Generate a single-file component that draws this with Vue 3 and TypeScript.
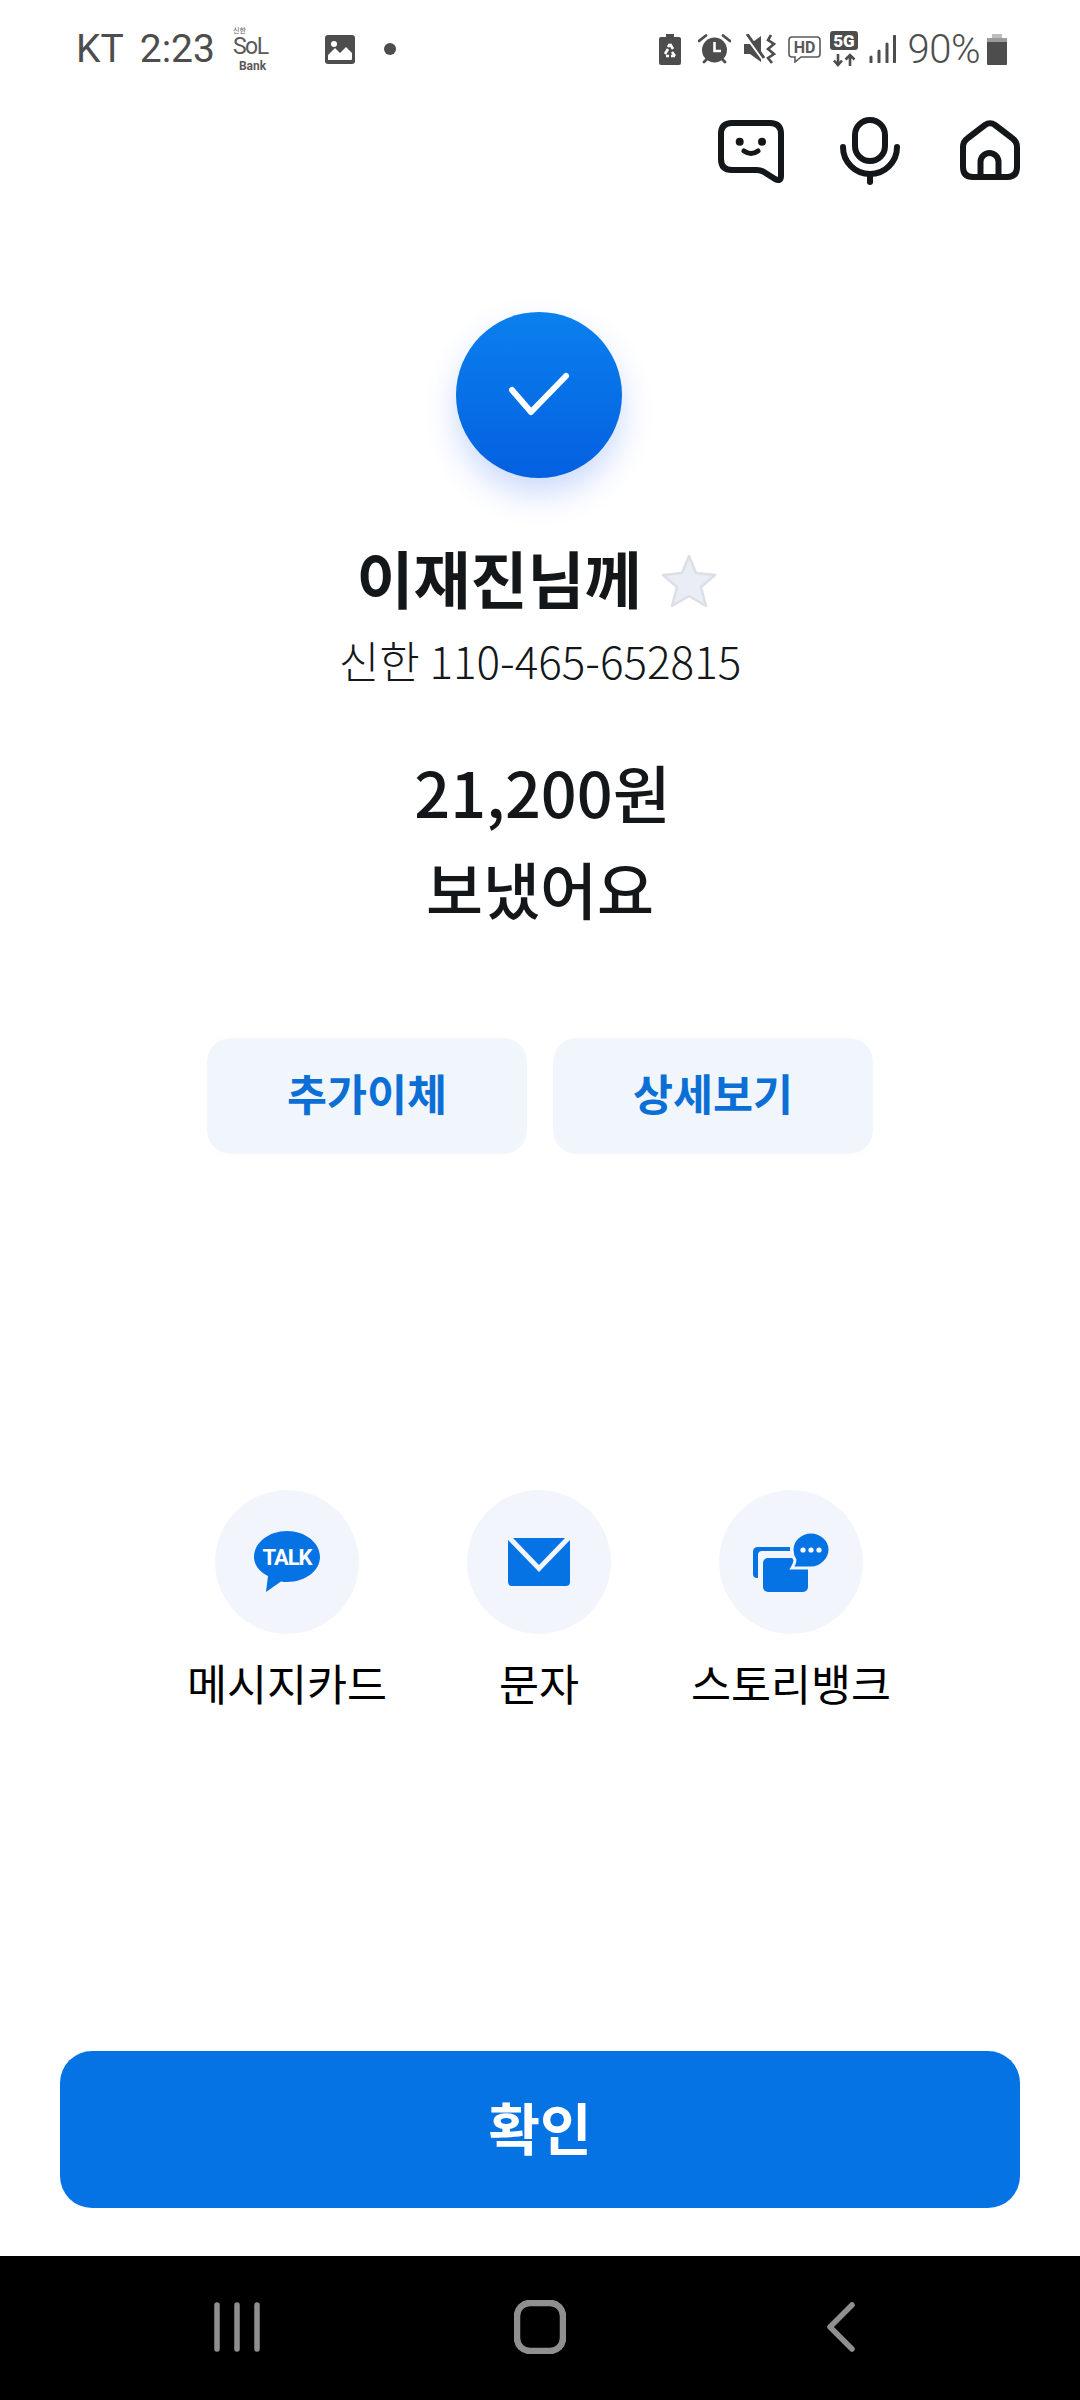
<template>
  <div class="screen">
    <!-- status bar -->
    <div class="status-bar">
      <span class="carrier">KT</span>
      <span class="clock">2:23</span>
      <div class="sol-logo">
        <span class="sol-top">신한</span>
        <span class="sol-main">SoL</span>
        <span class="sol-bank">Bank</span>
      </div>
      <svg class="st-image" width="30" height="29" viewBox="0 0 30 29">
        <rect width="30" height="29" rx="3" fill="#4d4d4d" />
        <path d="M3 20 L10 13 L15 18 L21 12 L27 18 V24 Q27 25 26 25 H3 Z" fill="#fff" />
        <circle cx="9" cy="9" r="3" fill="#fff" />
      </svg>
      <span class="st-dot"></span>

      <div class="st-right">
        <svg width="22" height="31" viewBox="0 0 22 31">
          <path d="M7 0 H15 V3 H20 Q22 3 22 5 V29 Q22 31 20 31 H2 Q0 31 0 29 V5 Q0 3 2 3 H7 Z" fill="#4d4d4d" />
          <path d="M11 10 L14 15 M9 13 L11 10 M6 20 L9 15 M7 22 H10 M16 22 H12 M16 22 L13 18" stroke="#fff" stroke-width="2.6" fill="none" />
        </svg>
        <svg class="ic-alarm" width="33" height="30" viewBox="0 0 33 30">
          <circle cx="16.5" cy="16" r="12.5" fill="#4d4d4d" />
          <path d="M16.5 8 V17 H23" stroke="#fff" stroke-width="2.6" fill="none" />
          <path d="M1 7 L8 1.5 M32 7 L25 1.5 M6 28 L9 25 M27 28 L24 25" stroke="#4d4d4d" stroke-width="2.8" stroke-linecap="round" />
        </svg>
        <svg class="ic-mute" width="32" height="30" viewBox="0 0 32 30">
          <path d="M0 10 H6 L17 2 V28 L6 20 H0 Z" fill="#4d4d4d" />
          <path d="M2 2 L21 28" stroke="#fff" stroke-width="3" />
          <path d="M3 0 L20 24" stroke="#4d4d4d" stroke-width="3" />
          <path d="M27 1 L24 6 L30 10 L24 15 L30 20 L24 24 L28 29" stroke="#4d4d4d" stroke-width="2.6" fill="none" />
        </svg>
        <svg class="ic-hd" width="33" height="27" viewBox="0 0 33 27">
          <path d="M4 1 H29 Q32 1 32 4 V18 Q32 21 29 21 H13 L7 26 V21 H4 Q1 21 1 18 V4 Q1 1 4 1 Z" fill="none" stroke="#5a5a5a" stroke-width="1.6" />
          <text x="16.5" y="17" class="hd-text">HD</text>
        </svg>
        <svg class="ic-5g" width="28" height="36" viewBox="0 0 28 36">
          <rect width="28" height="19" rx="3" fill="#4d4d4d" />
          <text x="14" y="15.5" class="five-text">5G</text>
          <path d="M8 23 V34 M4 29.5 L8 34 L12 29.5 M20 35 V24 M15.5 28.5 L20 24 L24.5 28.5" stroke="#4d4d4d" stroke-width="2.6" fill="none" />
        </svg>
        <svg class="ic-signal" width="27" height="28" viewBox="0 0 27 28">
          <path d="M2 22 V27 M10 16 V27 M18 9 V27 M25.5 1 V27" stroke="#4d4d4d" stroke-width="3" stroke-linecap="round" />
        </svg>
        <span class="percent">90%</span>
        <svg class="ic-battery" width="20" height="31" viewBox="0 0 20 31">
          <path d="M5 0 H15 V4 H5 Z" fill="#bdbdbd" />
          <path d="M0 5 H20 V30 Q20 31 19 31 H1 Q0 31 0 30 Z" fill="#4d4d4d" />
          <rect y="4" width="20" height="4" fill="#9a9a9a" />
        </svg>
      </div>
    </div>

    <!-- top actions -->
    <div class="top-actions">
      <svg class="ic-chat" width="66" height="64" viewBox="0 0 66 64">
        <path d="M14 3 H52 Q63 3 63 14 V56 Q63 62 57 59 L46 52 Q43 50 39 50 H14 Q3 50 3 39 V14 Q3 3 14 3 Z" fill="none" stroke="#14171a" stroke-width="6" stroke-linejoin="round" />
        <circle cx="21.7" cy="21.7" r="4" fill="#14171a" />
        <circle cx="44" cy="21.7" r="4" fill="#14171a" />
        <path d="M26 31 Q33 36 40 31" fill="none" stroke="#14171a" stroke-width="5" stroke-linecap="round" />
      </svg>
      <svg class="ic-mic" width="60" height="68" viewBox="0 0 60 68">
        <rect x="15" y="3" width="30" height="41" rx="15" fill="none" stroke="#14171a" stroke-width="6" />
        <path d="M3 30 A27 27 0 0 0 57 30" fill="none" stroke="#14171a" stroke-width="6" stroke-linecap="round" />
        <path d="M30 57 V65" stroke="#14171a" stroke-width="6" stroke-linecap="round" />
      </svg>
      <svg class="ic-home" width="60" height="60" viewBox="0 0 60 60">
        <path d="M25 5 Q30 1.5 35 5 L52 18 Q57 21.5 57 27 V47 Q57 57 47 57 H13 Q3 57 3 47 V27 Q3 21.5 8 18 Z" fill="none" stroke="#14171a" stroke-width="6" stroke-linejoin="round" />
        <path d="M20.5 57 V42 A9 9 0 0 1 38.5 42 V57" fill="none" stroke="#14171a" stroke-width="6" />
      </svg>
    </div>

    <main class="content">
      <div class="check-circle">
        <svg width="62" height="46" viewBox="0 0 62 46">
          <path d="M4 18 L23 40 L58 4" fill="none" stroke="#fff" stroke-width="6" stroke-linecap="round" stroke-linejoin="round" />
        </svg>
      </div>

      <div class="recipient">
        <h1 class="name">{{ recipient }}</h1>
        <svg class="star" width="56" height="54" viewBox="0 0 56 54">
          <path d="M28 2 L35 19 L54 21 L40 33 L45 52 L28 42 L11 52 L16 33 L2 21 L21 19 Z" fill="#e9edf6" stroke="#dcdfe6" stroke-width="2.5" stroke-linejoin="round" />
        </svg>
      </div>
      <p class="account">{{ account }}</p>

      <p class="amount">{{ amount }}</p>
      <p class="sent">보냈어요</p>

      <div class="sub-actions">
        <button class="sub-btn">추가이체</button>
        <button class="sub-btn">상세보기</button>
      </div>

      <div class="share-row">
        <div v-for="item in shareItems" :key="item.key" class="share-item">
          <div class="share-icon">
            <svg v-if="item.key === 'talk'" width="66" height="62" viewBox="0 0 66 62">
              <path d="M33 0 C51 0 66 11.500 66 26 C66 40 51 51 33 51 C31 51 29 51 27 50.500 L12 61 L14 45 C5 40.500 0 33.500 0 26 C0 11.500 15 0 33 0 Z" fill="#0673e5" />
              <text x="33" y="34" class="talk-text">TALK</text>
            </svg>
            <svg v-else-if="item.key === 'sms'" width="62" height="48" viewBox="0 0 62 48">
              <path d="M0 2 L31 34 L62 2 V44 Q62 48 58 48 H4 Q0 48 0 44 Z" fill="#0673e5" />
              <path d="M5 0 H57 L31 27 Z" fill="#0673e5" />
            </svg>
            <svg v-else width="78" height="60" viewBox="0 0 78 60">
              <path d="M6 15 H38 V19 H10 Q6 19 6 23 V46 H5 Q1 46 1 42 V20 Q1 15 6 15 Z" fill="#0673e5" />
              <rect x="11" y="26" width="45" height="34" rx="5" fill="#0673e5" />
              <path d="M59 0 C69 0 78 8 78 17.500 C78 27 69 36 59 36 L40 36 C42 33 43 31 43 28 C41 25 40 21 40 17.500 C40 8 49 0 59 0 Z" fill="#0673e5" stroke="#f2f6fc" stroke-width="3" />
              <circle cx="51" cy="18" r="2.600" fill="#fff" />
              <circle cx="59" cy="18" r="2.600" fill="#fff" />
              <circle cx="67" cy="18" r="2.600" fill="#fff" />
            </svg>
          </div>
          <span class="share-label">{{ item.label }}</span>
        </div>
      </div>
    </main>

    <div class="confirm-wrap">
      <button class="confirm-btn">확인</button>
    </div>

    <!-- android nav -->
    <nav class="nav-bar">
      <svg width="46" height="50" viewBox="0 0 46 50">
        <path d="M3 3 V47 M23 3 V47 M43 3 V47" stroke="#8f8f8f" stroke-width="5.5" stroke-linecap="round" />
      </svg>
      <svg class="nav-home" width="52" height="54" viewBox="0 0 52 54">
        <rect x="3" y="3" width="46" height="48" rx="13" fill="none" stroke="#8f8f8f" stroke-width="6.5" />
      </svg>
      <svg width="30" height="50" viewBox="0 0 30 50">
        <path d="M26 3 L4 25 L26 47" fill="none" stroke="#8f8f8f" stroke-width="5.5" stroke-linecap="round" stroke-linejoin="round" />
      </svg>
    </nav>
  </div>
</template>

<script setup lang="ts">
interface ShareItem {
  key: string
  label: string
}

const recipient = '이재진님께'
const account = '신한 110-465-652815'
const amount = '21,200원'

const shareItems: ShareItem[] = [
  { key: 'talk', label: '메시지카드' },
  { key: 'sms', label: '문자' },
  { key: 'story', label: '스토리뱅크' },
]
</script>

<style>
html,
body {
  margin: 0;
  background: #fff;
}
</style>

<style scoped>
.screen {
  width: 1080px;
  height: 2400px;
  display: flex;
  flex-direction: column;
  background: #fff;
  color: #14171a;
  font-family: "Noto Sans CJK KR", "Noto Sans", sans-serif;
  overflow: hidden;
}

.status-bar {
  height: 96px;
  display: flex;
  align-items: center;
  padding: 2px 73px 0 76px;
  box-sizing: border-box;
  color: #4d4d4d;
  font-family: Roboto, sans-serif;
  font-size: 39px;
}

.clock {
  margin-left: 16px;
}

.sol-logo {
  width: 34px;
  margin-left: 18px;
  display: flex;
  flex-direction: column;
  align-items: flex-start;
  line-height: 1;
  color: #5a5a5a;
}

.sol-top {
  font-family: "Noto Sans CJK KR", sans-serif;
  font-size: 7px;
  height: 9px;
  margin-left: 0;
}

.sol-main {
  font-size: 23px;
  height: 21px;
  line-height: 21px;
  letter-spacing: -1.5px;
}

.sol-bank {
  font-size: 12px;
  font-weight: 700;
  margin: 3px 0 0 6px;
}

.st-image {
  margin-left: 58px;
}

.st-dot {
  width: 12px;
  height: 12px;
  border-radius: 50%;
  background: #4d4d4d;
  margin-left: 29px;
}

.st-right {
  margin-left: auto;
  display: flex;
  align-items: center;
}

.ic-alarm {
  margin-left: 17px;
}

.ic-mute {
  margin-left: 13px;
}

.ic-hd {
  margin-left: 12px;
}

.ic-5g {
  margin-left: 9px;
}

.ic-signal {
  margin-left: 11px;
}

.percent {
  margin-left: 12px;
  font-size: 40px;
  font-weight: 300;
  letter-spacing: -0.5px;
}

.ic-battery {
  margin-left: 7px;
}

.hd-text {
  font-family: Roboto, sans-serif;
  font-size: 16px;
  font-weight: 700;
  fill: #5a5a5a;
  text-anchor: middle;
}

.five-text {
  font-family: Roboto, sans-serif;
  font-size: 17px;
  font-weight: 900;
  fill: #fff;
  text-anchor: middle;
}

.top-actions {
  display: flex;
  justify-content: flex-end;
  align-items: flex-start;
  padding: 21px 60px 0 0;
  height: 68px;
}

.ic-chat {
  margin-top: 3px;
}

.ic-mic {
  margin-left: 56px;
}

.ic-home {
  margin-left: 60px;
  margin-top: 3px;
}

.content {
  flex: 1;
  display: flex;
  flex-direction: column;
  align-items: center;
}

.check-circle {
  width: 166px;
  height: 166px;
  margin-top: 127px;
  margin-left: -2px;
  border-radius: 50%;
  background: linear-gradient(180deg, #0a80ee, #0460e0);
  box-shadow: 0 16px 32px rgba(40, 100, 240, 0.24);
  display: flex;
  align-items: center;
  justify-content: center;
}

.recipient {
  position: relative;
  margin-top: 55px;
  margin-left: -82px;
}

.name {
  margin: 0;
  font-size: 62px;
  font-weight: 700;
  line-height: 88px;
}

.star {
  position: absolute;
  left: calc(100% + 19px);
  top: 21px;
}

.account {
  margin: 9px 0 0;
  font-size: 44px;
  font-weight: 300;
  line-height: 60px;
}

.amount {
  margin: 55px 0 0 5px;
  font-size: 63px;
  font-weight: 500;
  line-height: 92px;
}

.sent {
  margin: 5px 0 0;
  font-size: 62px;
  font-weight: 500;
  line-height: 92px;
}

.sub-actions {
  display: flex;
  gap: 26px;
  margin-top: 104px;
}

.sub-btn {
  width: 320px;
  height: 116px;
  padding: 0 0 7px;
  border: none;
  border-radius: 24px;
  background: #f1f6fd;
  color: #0b6fd6;
  font-family: inherit;
  font-size: 43.5px;
  font-weight: 700;
}

.share-row {
  display: grid;
  grid-template-columns: repeat(3, 252px);
  margin-top: 336px;
  margin-left: -2px;
}

.share-item {
  display: flex;
  flex-direction: column;
  align-items: center;
}

.share-icon {
  width: 144px;
  height: 144px;
  border-radius: 50%;
  background: #f2f6fc;
  display: flex;
  align-items: center;
  justify-content: center;
}

.talk-text {
  font-family: Roboto, sans-serif;
  font-size: 22px;
  font-weight: 700;
  fill: #fff;
  text-anchor: middle;
  letter-spacing: -1px;
}

.share-label {
  margin-top: 17px;
  font-size: 43.5px;
  line-height: 64px;
  color: #000;
  white-space: nowrap;
}

.confirm-wrap {
  padding: 0 60px 48px;
}

.confirm-btn {
  width: 100%;
  height: 157px;
  padding: 0 0 9px;
  display: block;
  border: none;
  border-radius: 32px;
  background: #0673e5;
  color: #fff;
  font-family: inherit;
  font-size: 56px;
  font-weight: 700;
}

.nav-bar {
  height: 144px;
  background: #000;
  display: flex;
  align-items: center;
  justify-content: space-between;
  padding: 0 224px 3px 214px;
  box-sizing: border-box;
}

.nav-home {
  margin-left: -6px;
}
</style>
